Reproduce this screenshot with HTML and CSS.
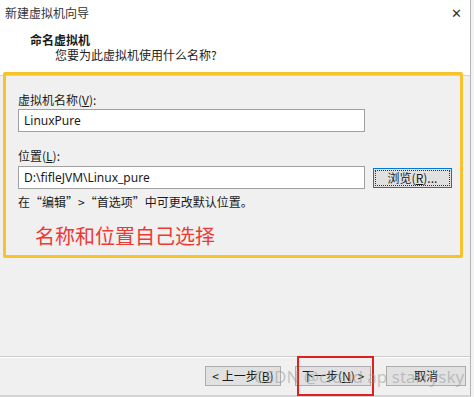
FILE: index.html
```html
<!DOCTYPE html>
<html lang="zh-CN">
<head>
    <meta charset="UTF-8">
    <meta name="viewport" content="width=device-width, initial-scale=1.0">
    <title>新建虚拟机向导</title>
    <link rel="stylesheet" href="styles.css">
</head>
<body>
<div class="window">
    <!-- Title bar -->
    <div class="titlebar">
        <span class="title">新建虚拟机向导</span>
        <span class="close">&#x2715;</span>
    </div>

    <!-- Wizard header -->
    <div class="header">
        <div class="header-title">命名虚拟机</div>
        <div class="header-sub">您要为此虚拟机使用什么名称?</div>
    </div>

    <!-- Form -->
    <div class="content">
        <div class="label">虚拟机名称(<u>V</u>):</div>
        <div class="field wide">LinuxPure</div>

        <div class="label second">位置(<u>L</u>):</div>
        <div class="row">
            <div class="field wide">D:\fifleJVM\Linux_pure</div>
            <button class="btn browse"><span class="focus">浏览(<u>R</u>)...</span></button>
        </div>
        <div class="hint">在“编辑”&gt;“首选项”中可更改默认位置。</div>

        <div class="note">名称和位置自己选择</div>
    </div>

    <!-- Buttons -->
    <div class="footer">
        <button class="btn">&lt; 上一步(<u>B</u>)</button>
        <button class="btn next">下一步(<u>N</u>) &gt;</button>
        <button class="btn cancel">取消</button>
    </div>

    <!-- Annotations -->
    <div class="mark-yellow"></div>
    <div class="mark-red"></div>
    <div class="watermark">CSDN @cloud ap starrysky</div>
</div>
</body>
</html>
```

FILE: styles.css
```css
html, body {
    height: 100%;
    margin: 0;
    overflow: hidden;
}

body {
    background-color: #f3f3f3;
    font-family: "Noto Sans CJK SC", "Noto Sans", sans-serif;
    font-size: 12px;
    color: #1a1a1a;
}

.window {
    position: relative;
    width: 471px;
    height: 397px;
    box-sizing: border-box;
    display: flex;
    flex-direction: column;
    background-color: #f0f0f0;
    border-right: 1px solid #b4b4b4;
    border-bottom: 2px solid #d4d4d4;
}

/* Title bar */
.titlebar {
    height: 25px;
    flex-shrink: 0;
    background-color: #ffffff;
    display: flex;
    align-items: center;
    justify-content: space-between;
    padding: 0 8px 0 5px;
}

.title {
    font-size: 12px;
    color: #333;
}

.close {
    font-size: 13px;
    color: #333;
}

/* Header */
.header {
    height: 51px;
    flex-shrink: 0;
    background-color: #ffffff;
    border-bottom: 1px solid #d2d2d2;
    box-sizing: border-box;
    padding-top: 6px;
}

.header-title {
    font-weight: bold;
    padding-left: 30px;
    line-height: 17px;
}

.header-sub {
    padding-left: 55px;
    line-height: 14px;
    color: #222;
}

/* Form */
.content {
    flex: 1;
    padding: 16px 0 0 18px;
    border-bottom: 1px solid #cdcdcd;
    box-shadow: 0 1px 0 #ffffff;
}

.label {
    line-height: 16px;
    margin-bottom: 1px;
}

.label.second {
    margin-top: 16px;
    margin-bottom: 2px;
}

.field {
    height: 23px;
    box-sizing: border-box;
    border: 1px solid #a0a0a0;
    background-color: #ffffff;
    padding-left: 5px;
    line-height: 21px;
    font-family: "Noto Sans", sans-serif;
    font-size: 12px;
}

.wide {
    width: 347px;
}

.row {
    display: flex;
    align-items: center;
    gap: 8px;
}

.btn {
    height: 20px;
    width: 76px;
    box-sizing: border-box;
    border: 1px solid #adadad;
    background-color: #e1e1e1;
    font-family: "Noto Sans CJK SC", "Noto Sans", sans-serif;
    font-size: 12px;
    color: #1a1a1a;
    padding: 0;
    line-height: 16px;
}

.browse {
    width: 79px;
    border: 1px solid #0078d7;
    padding: 1px;
}

.browse .focus {
    display: block;
    height: 100%;
    border: 1px dotted #333;
    box-sizing: border-box;
    line-height: 14px;
}

.hint {
    margin-top: 5px;
    line-height: 16px;
}

.note {
    margin-top: 13px;
    padding-left: 17px;
    font-size: 20px;
    line-height: 26px;
    color: #ee3a33;
}

/* Footer */
.footer {
    height: 38px;
    flex-shrink: 0;
    box-sizing: border-box;
    display: flex;
    align-items: flex-start;
    padding: 9px 0 0 205px;
}

.btn.next {
    margin-left: 14px;
}

.btn.cancel {
    margin-left: 15px;
    width: 80px;
}

/* Annotations */
.mark-yellow {
    position: absolute;
    left: 3px;
    top: 72px;
    width: 460px;
    height: 186px;
    box-sizing: border-box;
    border: 3px solid #f7c22a;
    border-radius: 2px;
}

.mark-red {
    position: absolute;
    left: 297px;
    top: 356px;
    width: 77px;
    height: 40px;
    box-sizing: border-box;
    border: 2px solid #e0201e;
}

.watermark {
    position: absolute;
    left: 254px;
    top: 367px;
    font-family: "Noto Sans", sans-serif;
    font-size: 17px;
    line-height: 20px;
    color: rgba(150, 150, 150, 0.5);
    white-space: nowrap;
}
```
